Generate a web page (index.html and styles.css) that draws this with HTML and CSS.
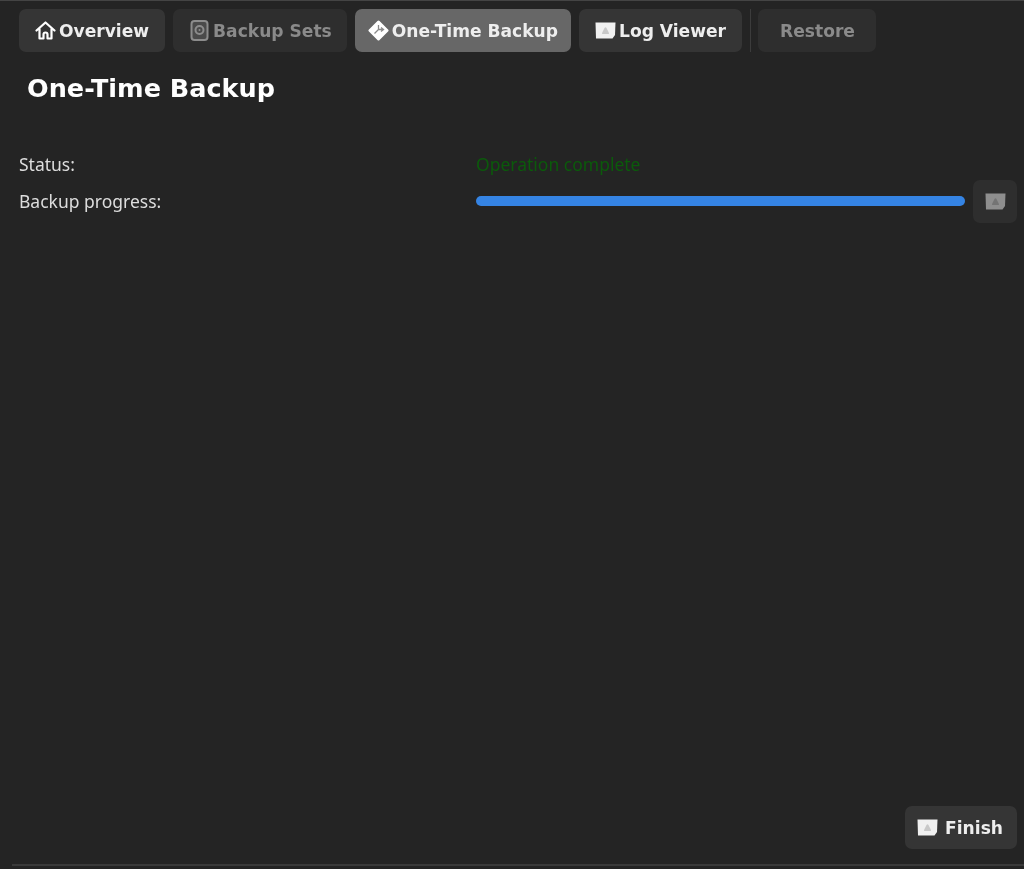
FILE: index.html
```html
<!DOCTYPE html>
<html lang="en">
  <head>
    <meta charset="UTF-8" />
    <meta name="viewport" content="width=device-width, initial-scale=1.0" />
    <title>One-Time Backup</title>
    <link rel="stylesheet" href="styles.css">
  </head>

  <body>
    <div class="window">
      <!-- Toolbar -->
      <div class="toolbar">
        <div class="tool-button">
          <svg class="icon" viewBox="0 0 21 21">
            <path d="M1.5 10.5 L10.5 2.5 L19.5 10.5 M4.5 9 V18.5 H8.5 V14.5 A2 2 0 0 1 12.5 14.5 V18.5 H16.5 V9" fill="none" stroke="#ffffff" stroke-width="2.2" stroke-linejoin="round" stroke-linecap="round" />
          </svg>
          <span>Overview</span>
        </div>
        <div class="tool-button disabled">
          <svg class="icon" viewBox="0 0 21 21">
            <rect x="2.5" y="1" width="16" height="19" rx="3" fill="#4a4a4a" stroke="#8c8c8c" stroke-width="2" />
            <circle cx="10.5" cy="10" r="4" fill="none" stroke="#8c8c8c" stroke-width="2" />
            <circle cx="10.5" cy="10" r="1" fill="#8c8c8c" />
          </svg>
          <span>Backup Sets</span>
        </div>
        <div class="tool-button active">
          <svg class="icon" viewBox="0 0 21 21">
            <path d="M10.5 2 L19 10.5 L10.5 19 L2 10.5 Z" fill="#ffffff" stroke="#ffffff" stroke-width="3" stroke-linejoin="round" />
            <path d="M10.5 5 V9.5 L6.5 13.5 M10.5 9.5 H15 M13 7.5 L15.5 9.5 L13 11.5" fill="none" stroke="#8a8a8a" stroke-width="1.3" />
          </svg>
          <span>One-Time Backup</span>
        </div>
        <div class="tool-button">
          <svg class="icon" viewBox="0 0 21 21">
            <path d="M0.5 2.5 H20.5 L20 15 L17.5 18.5 H1 Z" fill="#f0f0f0" />
            <path d="M7 14 Q7 12.5 8 11 L9.5 8 Q10.5 6.5 11.5 8 L13 11 Q14 12.5 14 14 Z" fill="#c8c8c8" />
          </svg>
          <span>Log Viewer</span>
        </div>
        <div class="toolbar-sep"></div>
        <div class="tool-button disabled plain">
          <span>Restore</span>
        </div>
      </div>

      <h1 class="page-title">One-Time Backup</h1>

      <!-- Progress -->
      <div class="form">
        <div class="form-row">
          <div class="form-label">Status:</div>
          <div class="status-text">Operation complete</div>
        </div>
        <div class="form-row">
          <div class="form-label">Backup progress:</div>
          <div class="progress-track">
            <div class="progress-fill"></div>
          </div>
          <div class="square-button">
            <svg class="icon" viewBox="0 0 21 21">
              <path d="M0.5 2.5 H20.5 L20 15 L17.5 18.5 H1 Z" fill="#8e8e8e" />
              <path d="M7 14 Q7 12.5 8 11 L9.5 8 Q10.5 6.5 11.5 8 L13 11 Q14 12.5 14 14 Z" fill="#747474" />
            </svg>
          </div>
        </div>
      </div>

      <!-- Footer -->
      <div class="footer">
        <div class="tool-button finish">
          <svg class="icon" viewBox="0 0 21 21">
            <path d="M0.5 2.5 H20.5 L20 15 L17.5 18.5 H1 Z" fill="#f0f0f0" />
            <path d="M7 14 Q7 12.5 8 11 L9.5 8 Q10.5 6.5 11.5 8 L13 11 Q14 12.5 14 14 Z" fill="#c8c8c8" />
          </svg>
          <span>Finish</span>
        </div>
      </div>
    </div>
  </body>
</html>
```

FILE: styles.css
```css
body,
html {
  margin: 0;
  padding: 0;
  width: 100%;
  height: 100%;
  overflow: hidden;
  background-color: #242424;
}

/* The source capture is slightly soft */
.window {
  height: 869px;
  box-sizing: border-box;
  background-color: #242424;
  color: #ffffff;
  display: flex;
  flex-direction: column;
  border-top: 1px solid #444444;
  font-family: "Noto Sans", sans-serif;
  filter: blur(0.4px);
}

/* Toolbar */
.toolbar {
  display: flex;
  align-items: stretch;
  gap: 8px;
  height: 43px;
  margin-top: 8px;
  padding-left: 19px;
}

.tool-button {
  display: flex;
  align-items: center;
  justify-content: center;
  gap: 3px;
  height: 43px;
  padding: 0 16px;
  box-sizing: border-box;
  background-color: #353535;
  border-radius: 7px;
  font-family: "DejaVu Sans", sans-serif;
  font-size: 17.1px;
  font-weight: bold;
  color: #eeeeee;
}

.tool-button.active {
  background-color: #676767;
  padding: 0 13px;
}

.tool-button.disabled {
  background-color: #2e2e2e;
  color: #8a8a8a;
  padding: 0 15px 0 16px;
}

.tool-button.plain {
  padding: 0 21px 0 22px;
}

.icon {
  width: 21px;
  height: 21px;
  flex: none;
}

.toolbar-sep {
  width: 1px;
  margin-right: -1px;
  background-color: #3c3c3c;
}

.page-title {
  margin: 19px 0 0 27px;
  font-family: "DejaVu Sans", sans-serif;
  font-size: 25.5px;
  line-height: 34px;
  font-weight: bold;
  color: #ffffff;
}

/* Status rows */
.form {
  margin-top: 43px;
  padding: 0 7px 0 19px;
  display: flex;
  flex-direction: column;
}

.form-row {
  display: flex;
  align-items: center;
  min-height: 43px;
}

.form-row:first-child {
  min-height: 31px;
}

.form-label {
  width: 457px;
  font-size: 17.5px;
  color: #dddddd;
}

.status-text {
  font-size: 17.5px;
  color: #0b5a0b;
}

.progress-track {
  flex: 1;
  height: 10px;
  border-radius: 5px;
  background-color: #3a3a3a;
  overflow: hidden;
}

.progress-fill {
  height: 100%;
  background-color: #3584e4;
}

.square-button {
  width: 44px;
  height: 43px;
  margin: 1px 0 0 8px;
  display: flex;
  align-items: center;
  justify-content: center;
  background-color: #2e2e2e;
  border-radius: 7px;
}

/* Footer */
.footer {
  margin-top: auto;
  display: flex;
  justify-content: flex-end;
  padding: 0 7px 20px 12px;
  position: relative;
}

.footer::after {
  content: "";
  position: absolute;
  left: 12px;
  right: 0;
  bottom: 3px;
  height: 2px;
  background-color: #3a3a3a;
}

.tool-button.finish {
  gap: 7px;
  padding: 0 14px 0 12px;
}
```
